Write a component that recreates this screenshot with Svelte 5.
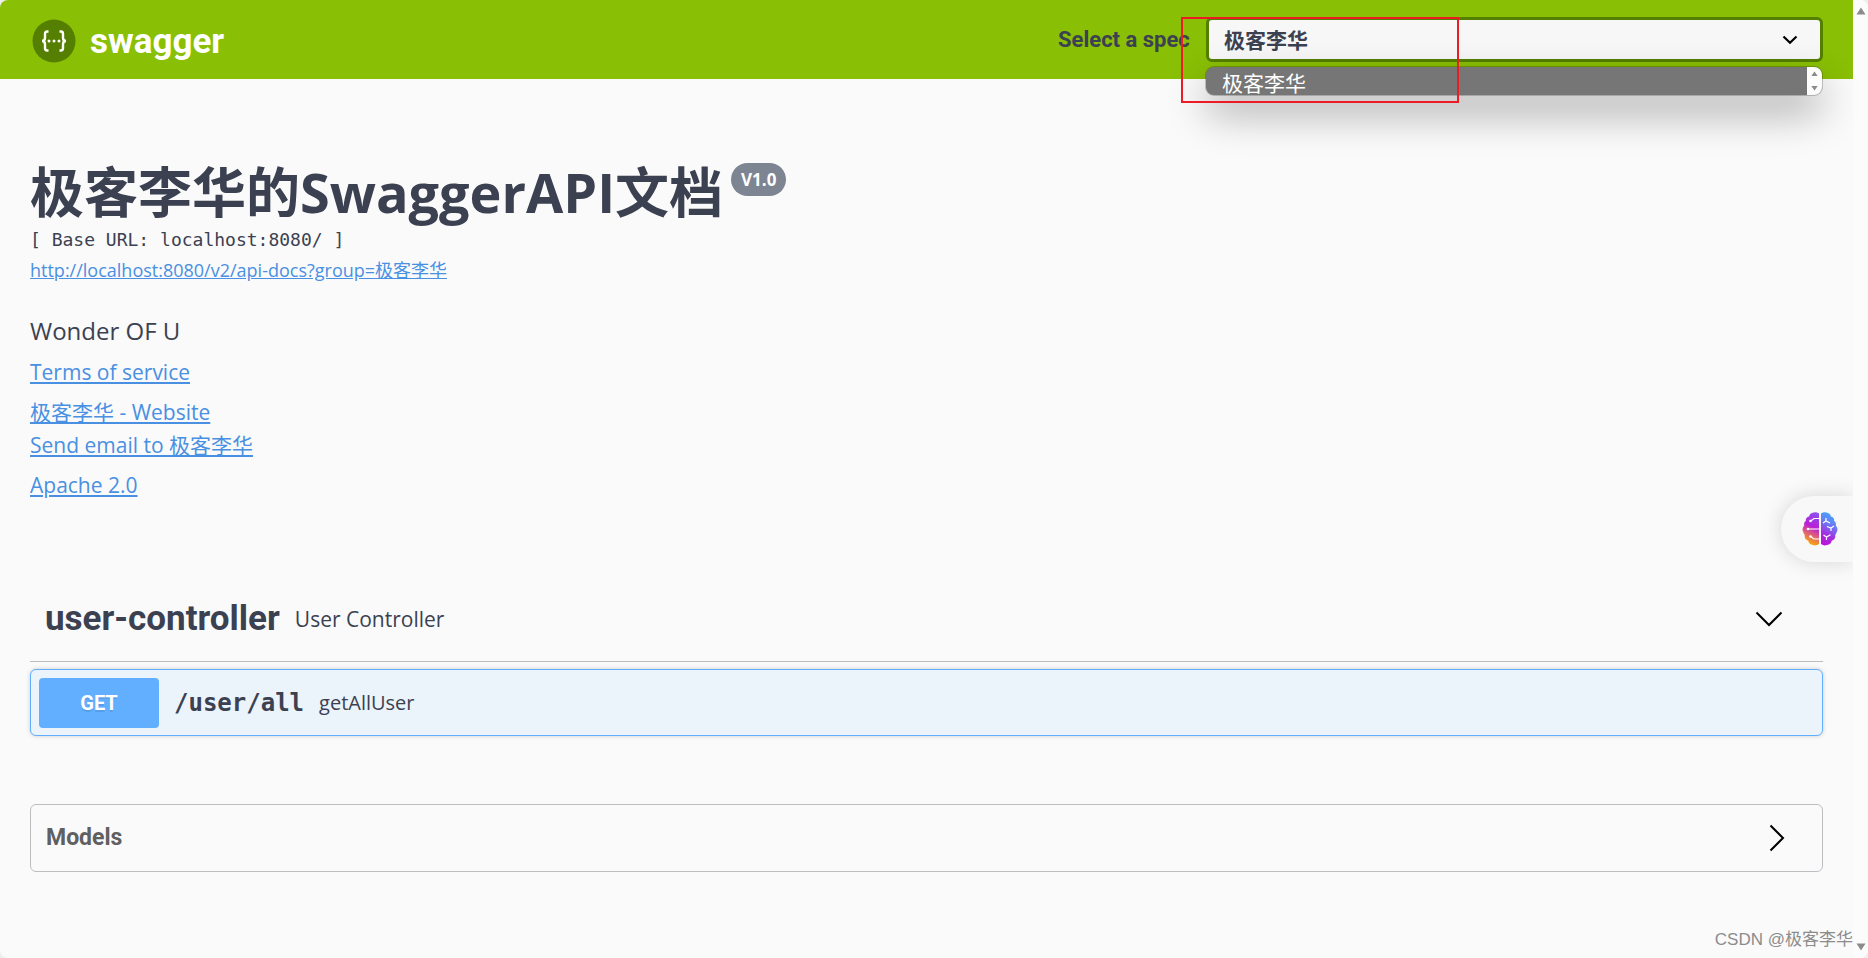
<script>
  const spec = '极客李华';
  let selected = $state(spec);
  let group = $state('user');
</script>

<div class="window">
  <div class="page">
    <header class="topbar">
      <a class="brand" href="#top">
        <svg class="logo" viewBox="0 0 44 44" aria-hidden="true">
          <circle cx="22" cy="22" r="21.500" fill="#547f00" />
          <g fill="none" stroke="#fff" stroke-width="2.4">
            <path d="M16.5 12.5h-1.3q-2.2 0-2.2 2.2v4q0 3.3-3 3.3q3 0 3 3.3v4q0 2.2 2.2 2.2h1.3" />
            <path d="M27.5 12.5h1.3q2.2 0 2.2 2.2v4q0 3.3 3 3.3q-3 0-3 3.3v4q0 2.2-2.2 2.2h-1.3" />
          </g>
          <g fill="#fff"><circle cx="17" cy="22" r="1.500" /><circle cx="22" cy="22" r="1.500" /><circle cx="27" cy="22" r="1.500" /></g>
        </svg>
        <span>swagger</span>
      </a>
      <div class="chooser">
        <label for="spec">Select a spec</label>
        <div class="field">
          <select id="spec" bind:value={selected}>
            <option>{spec}</option>
          </select>
          <svg class="caret" viewBox="0 0 16 10" aria-hidden="true"><path d="M1.500 1.500L8 7.700l6.500-6.200" fill="none" stroke="#000" stroke-width="2.200" /></svg>
          <div class="popup">
            <span class="choice">{spec}</span>
            <span class="steps">
              <svg viewBox="0 0 15 28" aria-hidden="true"><path d="M7.500 4.500l3.200 4.500h-6.400zM7.500 23.500l3.200-4.500h-6.400z" fill="#8b8b8b" /></svg>
            </span>
          </div>
          <div class="mark"></div>
        </div>
      </div>
    </header>

    <main>
      <section class="info">
        <h1>{spec}的SwaggerAPI文档<span class="version">V1.0</span></h1>
        <pre>[ Base URL: localhost:8080/ ]</pre>
        <a class="docs" href="#docs">http://localhost:8080/v2/api-docs?group={spec}</a>
        <p>Wonder OF U</p>
        <div class="row terms"><a href="#terms">Terms of service</a></div>
        <div class="row contact">
          <a href="#website">{spec} - Website</a>
          <a href="#email">Send email to {spec}</a>
        </div>
        <div class="row"><a href="#license">Apache 2.0</a></div>
      </section>

      <section>
        <div class="tag">
          <h2>user-controller</h2>
          <span>User Controller</span>
          <button aria-label="Toggle user-controller" onclick={() => (group = 'user')}>
            <svg viewBox="0 0 30 30"><path d="M2.500 8.500L15 21 27.500 8.500" /></svg>
          </button>
        </div>
        <div class="operation">
          <button class="method">GET</button>
          <code>/user/all</code>
          <span>getAllUser</span>
        </div>
      </section>

      <section class="models">
        <h3>Models</h3>
        <button aria-label="Expand models">
          <svg viewBox="0 0 30 30"><path d="M8.500 2.500L21 15 8.500 27.500" /></svg>
        </button>
      </section>
    </main>

    <button class="assistant" aria-label="Assistant">
      <svg viewBox="0 0 36 34" aria-hidden="true">
        <defs>
          <linearGradient id="left" gradientUnits="userSpaceOnUse" x1="4" y1="30" x2="17" y2="2"><stop offset="0" stop-color="#f9a60a" /><stop offset=".3" stop-color="#dd6078" /><stop offset=".55" stop-color="#b81fd8" /><stop offset="1" stop-color="#8a50f0" /></linearGradient>
          <linearGradient id="right" x1="0.3" y1="1" x2="0.600" y2="0"><stop offset="0" stop-color="#bd12dc" /><stop offset=".3" stop-color="#a52de0" /><stop offset=".65" stop-color="#6a7bf5" /><stop offset="1" stop-color="#3fa9ff" /></linearGradient>
        </defs>
        <path d="M17 1.500Q14 -.5 10.500 .8Q7.500 1.500 7 4.500Q3.500 5.500 3.800 9Q1.500 10.500 2.200 13.500Q-.8 17 1.500 20.500Q1.800 22 2.800 23Q2 27.500 6.300 28.800Q7 32.500 11 33Q14 34.200 17 32z" fill="url(#left)" />
        <path d="M19 1.500Q22 -.5 25.500 .8Q28.500 1.500 29 4.500Q32.500 5.500 32.200 9Q34.500 10.500 33.800 13.500Q36.800 17 34.500 20.500Q34.200 22 33.200 23Q34 27.500 29.700 28.800Q29 32.500 25 33Q22 34.200 19 32z" fill="url(#right)" />
        <g fill="none" stroke="#fff" stroke-width="1.200">
          <path d="M17 6.500h-5l-3 2.200M17 17H6M17 27h-5l-3-2.200M24 6v3l-3 2M24 9l4 2M25 14.500l4 1.500 3-2M29 16v3M21.500 23l3 2 4-2.200M24.500 25v3" />
        </g>
        <g fill="#fff"><circle cx="8.500" cy="9" r="1.300" /><circle cx="6" cy="17" r="1.300" /><circle cx="8.500" cy="24.500" r="1.300" /></g>
      </svg>
    </button>
    <div class="credit">CSDN @{spec}</div>
  </div>
  <div class="scroll" aria-hidden="true">
    <svg viewBox="0 0 10 8"><path d="M5 .5L9.500 7.500h-9z" /></svg>
    <svg viewBox="0 0 10 8"><path d="M5 7.500L9.500 .5h-9z" /></svg>
  </div>
</div>

<style>
  :global(body) {
    margin: 0;
    background: #eee;
  }
  .window {
    display: flex;
    min-height: 100vh;
    border-radius: 8px;
    overflow: hidden;
    background: #fafafa;
    color: #3b4151;
    font: 21px/30px "Open Sans", "Noto Sans CJK SC", sans-serif;
  }
  .page {
    flex: 1;
    min-width: 0;
    position: relative;
  }
  .scroll {
    width: 15px;
    background: #fcfcfc;
    display: flex;
    flex-direction: column;
    justify-content: space-between;
    align-items: center;
    padding: 7px 0;
    box-sizing: border-box;
  }
  .scroll svg {
    width: 10px;
    height: 8px;
    fill: #8b8b8b;
  }
  .topbar {
    background: #89bf04;
    height: 79px;
    padding: 0 30px;
    box-sizing: border-box;
    display: flex;
    align-items: center;
    justify-content: space-between;
  }
  .brand {
    display: flex;
    align-items: center;
    gap: 14px;
    padding-top: 2px;
    color: #fff;
    text-decoration: none;
    font-family: Roboto, sans-serif;
    font-weight: 700;
    font-size: 35px;
    line-height: 44px;
  }
  .brand span {
    padding-top: 3px;
  }
  .logo {
    width: 44px;
    height: 44px;
    margin-left: 2px;
  }
  .chooser {
    display: flex;
    align-items: center;
    width: 765px;
    gap: 15px;
  }
  .chooser label {
    flex: 1;
    font-family: Roboto, sans-serif;
    font-size: 22px;
    font-weight: 700;
    white-space: nowrap;
  }
  .field {
    position: relative;
    flex: none;
    width: 617px;
  }
  select {
    display: block;
    appearance: none;
    width: 100%;
    height: 45px;
    box-sizing: border-box;
    border: 3px solid #547f00;
    border-radius: 6px;
    background: #f7f7f7;
    color: #3b4151;
    padding: 0 15px;
    font: 700 21px "Open Sans", "Noto Sans CJK SC", sans-serif;
  }
  .caret {
    position: absolute;
    right: 25px;
    top: 18px;
    width: 16px;
    height: 10px;
  }
  .popup {
    position: absolute;
    z-index: 2;
    top: 50px;
    left: 0;
    right: 1px;
    height: 28px;
    display: flex;
    border-radius: 8px;
    background: #767676;
    box-shadow: 0 0 0 1px #00000033, 0 18px 40px #00000055;
    color: #fff;
    line-height: 32px;
  }
  .choice {
    flex: 1;
    padding-left: 16px;
  }
  .steps {
    width: 15px;
    border-radius: 0 8px 8px 0;
    background: #fcfcfc;
  }
  .steps svg {
    display: block;
    width: 15px;
    height: 28px;
  }
  .mark {
    position: absolute;
    z-index: 3;
    left: -25px;
    top: 0;
    width: 278px;
    height: 86px;
    box-sizing: border-box;
    border: 2px solid #ed1c24;
    pointer-events: none;
  }
  main {
    padding: 77px 30px 80px;
  }
  h1,
  h2,
  h3,
  p,
  pre {
    margin: 0;
  }
  h1 {
    display: flex;
    align-items: flex-start;
    gap: 8px;
    font-size: 54px;
    line-height: 72px;
  }
  .version {
    margin-top: 7px;
    padding: 0 10px;
    border-radius: 17px;
    background: #7d8492;
    color: #fff;
    font-size: 17px;
    line-height: 33px;
  }
  pre {
    font: 18px/24px "DejaVu Sans Mono", monospace;
  }
  a {
    color: #4990e2;
  }
  .docs {
    display: block;
    width: max-content;
    margin: 4px 0 32px;
    font-size: 18px;
    line-height: 28px;
  }
  p {
    font-size: 24px;
  }
  .row {
    margin-top: 10px;
  }
  .row.terms {
    margin-top: 11px;
  }
  .contact {
    display: flex;
    flex-direction: column;
    align-items: flex-start;
    gap: 3px;
  }
  .tag {
    display: flex;
    align-items: center;
    gap: 15px;
    height: 80px;
    margin-top: 79px;
    padding: 0 39px 2px 15px;
    border-bottom: 1px solid #bcbec2;
  }
  h2 {
    font-family: Roboto, sans-serif;
    font-size: 35px;
    line-height: 40px;
  }
  .tag button {
    margin-left: auto;
  }
  button {
    border: 0;
    padding: 0;
    background: none;
    font: inherit;
  }
  .tag svg,
  .models svg {
    display: block;
    width: 30px;
    height: 30px;
    fill: none;
    stroke: #000;
    stroke-width: 2;
  }
  .operation {
    display: flex;
    align-items: center;
    gap: 15px;
    margin-top: 7px;
    padding: 8px 8px 7px;
    border: 1px solid #61affe;
    border-radius: 6px;
    background: #ebf3fb;
    box-shadow: 0 0 4px #00000030;
    font-size: 20px;
  }
  .method {
    width: 120px;
    height: 50px;
    border-radius: 4px;
    background: #61affe;
    color: #fff;
    font-family: Roboto, sans-serif;
    font-size: 20px;
    font-weight: 700;
    text-shadow: 0 2px 0 #0000001a;
  }
  code {
    font: 700 24px "DejaVu Sans Mono", monospace;
  }
  .models {
    display: flex;
    align-items: center;
    justify-content: space-between;
    height: 66px;
    margin-top: 68px;
    padding: 0 30px 0 15px;
    border: 1px solid #bcbec2;
    border-radius: 6px;
  }
  h3 {
    color: #606060;
    font-family: Roboto, sans-serif;
    font-size: 23px;
  }
  .assistant {
    position: absolute;
    right: 0;
    top: 496px;
    width: 72px;
    height: 66px;
    padding-left: 21px;
    border-radius: 33px 0 0 33px;
    background: #f8f8f8;
    box-shadow: 0 0 20px #00000026;
    clip-path: inset(-40px 0 -40px -40px);
  }
  .assistant svg {
    display: block;
    width: 36px;
    height: 34px;
  }
  .credit {
    position: absolute;
    right: 0;
    bottom: 3px;
    color: #8c8c8c;
    font-family: "Liberation Sans", "Noto Sans CJK SC", sans-serif;
    font-size: 17px;
  }
</style>
